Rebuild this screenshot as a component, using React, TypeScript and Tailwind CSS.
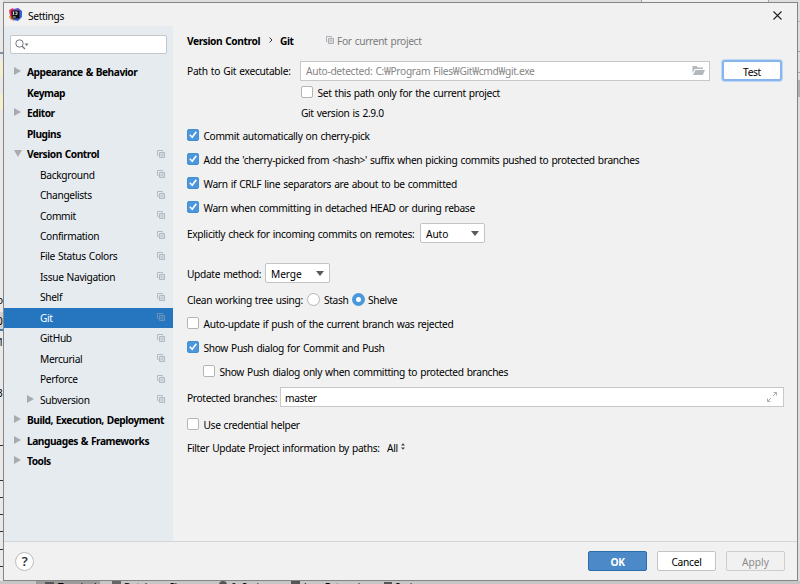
import React from 'react';

function Copy({ className = 'text-[#b3b9bf]' }: { className?: string }) {
  return (
    <svg className={`h-2 w-2 shrink-0 ${className}`} viewBox="0 0 8 8" fill="none" stroke="currentColor">
      <path d="M1.5 5.500H.5v-5h5v1" />
      <path d="M2.500 2.500h5v5h-5z" fill="currentColor" fillOpacity=".35" />
      <path d="M4 5h2" />
    </svg>
  );
}

function Check({ on = false }: { on?: boolean }) {
  return on ? (
    <span className="mb-[2px] flex h-3 w-3 shrink-0 items-center justify-center rounded-[2px] border border-[#438fd2] bg-[#4a97dc]">
      <svg className="h-[10px] w-[10px] shrink-0" viewBox="0 0 10 10" fill="none" stroke="white" strokeWidth="1.6">
        <path d="M1.8 4.8 4.2 7.3 8.3 1.8" />
      </svg>
    </span>
  ) : (
    <span className="mb-[2px] h-3 w-3 shrink-0 rounded-[2px] border border-[#b4b4b4] bg-white" />
  );
}

function CheckRow({ on, label }: { on?: boolean; label: string }) {
  return (
    <label className="flex h-6 items-center gap-[4.5px]">
      <Check on={on} />
      <span>{label}</span>
    </label>
  );
}

function Combo({ value }: { value: string }) {
  return (
    <div className="flex h-5 w-[65px] items-center justify-between rounded-[2px] border border-[#c4c4c4] bg-white pr-[5px] pl-[5px]">
      <span className="pt-[2px] tracking-[-0.1px]">{value}</span>
      <svg className="h-[5px] w-[8px]" viewBox="0 0 8 5">
        <path d="M0 0h8L4 5z" fill="#5a5a5a" />
      </svg>
    </div>
  );
}

type Node = { label: string; level: 0 | 1; arrow?: 'right' | 'down'; copy?: boolean; active?: boolean };

const tree: Node[] = [
  { label: 'Appearance & Behavior', level: 0, arrow: 'right' },
  { label: 'Keymap', level: 0 },
  { label: 'Editor', level: 0, arrow: 'right' },
  { label: 'Plugins', level: 0 },
  { label: 'Version Control', level: 0, arrow: 'down', copy: true },
  { label: 'Background', level: 1, copy: true },
  { label: 'Changelists', level: 1, copy: true },
  { label: 'Commit', level: 1, copy: true },
  { label: 'Confirmation', level: 1, copy: true },
  { label: 'File Status Colors', level: 1, copy: true },
  { label: 'Issue Navigation', level: 1, copy: true },
  { label: 'Shelf', level: 1, copy: true },
  { label: 'Git', level: 1, copy: true, active: true },
  { label: 'GitHub', level: 1, copy: true },
  { label: 'Mercurial', level: 1, copy: true },
  { label: 'Perforce', level: 1, copy: true },
  { label: 'Subversion', level: 1, arrow: 'right', copy: true },
  { label: 'Build, Execution, Deployment', level: 0, arrow: 'right' },
  { label: 'Languages & Frameworks', level: 0, arrow: 'right' },
  { label: 'Tools', level: 0, arrow: 'right' },
];

function TreeRow({ n }: { n: Node }) {
  return (
    <div
      className={`flex h-[20.47px] shrink-0 items-center pr-2 ${n.level ? 'pl-[23px]' : 'pl-[10px]'} ${
        n.active ? 'bg-[#2675bf] text-white' : ''
      }`}
    >
      <span className="flex w-[13px] shrink-0 items-center">
        {n.arrow === 'right' && (
          <svg className="mb-[2px] h-2 w-[7px]" viewBox="0 0 7 8">
            <path d="M0 0 7 4 0 8z" fill="#a9abad" />
          </svg>
        )}
        {n.arrow === 'down' && (
          <svg className="mb-[2px] h-[7px] w-2" viewBox="0 0 8 7">
            <path d="M0 0h8L4 7z" fill="#a9abad" />
          </svg>
        )}
      </span>
      <span className={`whitespace-nowrap ${n.level ? 'tracking-[-0.34px]' : 'font-bold tracking-[-0.48px]'}`}>
        {n.label}
      </span>
      {n.copy && (
        <span className="ml-auto pb-px">
          <Copy className={n.active ? 'text-[#6b93bb]' : 'text-[#b3b9bf]'} />
        </span>
      )}
    </div>
  );
}

function Logo() {
  return (
    <svg className="h-[13px] w-[13px]" viewBox="0 0 13 13">
      <path d="M0 2 4 0 6 3 3 10 1 8z" fill="#f0306a" />
      <path d="M0 8l3 0 2 5-4-2z" fill="#f8852e" />
      <path d="M5 1 9 0l4 3v6l-4 4-5-1z" fill="#3a62d8" />
      <path d="M9 0l3 3-2 1-4-2z" fill="#7650c8" />
      <path d="M2.5 2.5h8v8h-8z" fill="#111" />
      <path d="M3.7 4h1.6M4.5 4v2.4M3.7 6.4h1.6M6.3 4H8v2.4H6.3M3.7 9h3" stroke="#fff" strokeWidth=".8" fill="none" />
    </svg>
  );
}

/* Editor gutter visible along the left edge of the dialog. */
function LeftStrip() {
  return (
    <div className="absolute top-0 left-0 h-full w-[3px] overflow-hidden bg-[#e9e9e9] text-[10px] leading-3">
      <div className="absolute top-[61px] h-4 w-[3px] bg-[#f3efcf]" />
      <div className="absolute top-[94px] h-4 w-[3px] bg-[#f3efcf]" />
      <div className="absolute top-[52px] h-[2px] w-[3px] bg-[#8390a0]" />
      <div className="absolute top-[312px] h-[17px] w-[3px] bg-[#cfd2d5]" />
      <div className="absolute top-[329px] h-[2px] w-[3px] bg-[#3f7db5]" />
      <span className="absolute top-[294px] -left-[3px]">o</span>
      <span className="absolute top-[315px] -left-[3px]">0</span>
      <span className="absolute top-[336px] -left-[2px]">1</span>
      <span className="absolute top-[387px] -left-[3px]">3</span>
      <div className="absolute top-[445px] h-px w-[3px] bg-[#333]" />
      <div className="absolute top-[480px] h-px w-[3px] bg-[#333]" />
      <div className="absolute top-[497px] h-px w-[3px] bg-[#333]" />
      <div className="absolute top-[514px] h-px w-[3px] bg-[#333]" />
      <div className="absolute top-[531px] h-px w-[3px] bg-[#333]" />
      <div className="absolute top-[549px] h-px w-[3px] bg-[#333]" />
      <div className="absolute top-[566px] h-px w-[3px] bg-[#333]" />
    </div>
  );
}

/* Edges of the main window above and to the right of the dialog. */
function OuterEdges() {
  return (
    <>
      <div className="absolute top-0 left-[641px] h-[2px] w-[128px] border-x border-[#a5a5a5] bg-[#efefef]" />
      <div className="absolute top-[21px] right-0 h-px w-[2px] bg-[#b8b8b8]" />
      <div className="absolute top-[51px] right-0 h-px w-[2px] bg-[#a8a8a8]" />
      <div className="absolute top-[72px] right-0 h-px w-[2px] bg-[#a8a8a8]" />
      <div className="absolute top-[80px] right-0 h-[17px] w-[2px] bg-[#b0b0b0]" />
    </>
  );
}

/* Tool window bar, of which only the top edge shows below the dialog. */
function BottomStrip() {
  return (
    <div className="absolute bottom-0 left-0 h-[3px] w-full overflow-hidden bg-[#c6c6c6] text-[10px] leading-3 text-black">
      <div className="absolute top-0 left-[36px] h-[3px] w-16 bg-[#9b9b9b]" />
      <div className="absolute top-px left-[45px] h-[2px] w-[9px] bg-[#555]" />
      <span className="absolute top-0 left-[58px]">Terminal</span>
      <div className="absolute top-0 left-[112px] h-[3px] w-[9px] bg-[#666]" />
      <span className="absolute top-0 left-[124px] whitespace-nowrap">Database Changes</span>
      <div className="absolute top-0 left-[219px] h-2 w-2 rounded-full bg-[#555]" />
      <span className="absolute top-0 left-[231px]">0: Spring</span>
      <div className="absolute top-0 left-[291px] h-[3px] w-[9px] bg-[#555]" />
      <span className="absolute top-0 left-[304px] whitespace-nowrap">Java Enterprise</span>
      <div className="absolute top-px left-[384px] h-[2px] w-[8px] bg-[#555]" />
      <span className="absolute top-0 left-[395px]">Spring</span>
    </div>
  );
}

export default function App() {
  return (
    <div className="relative flex h-[584px] w-[800px] overflow-hidden bg-[#dedede] pt-[2px] pr-[2px] pb-[3px] pl-[3px] font-['Noto_Sans','Open_Sans',sans-serif] text-[10.2px] leading-[14px] tracking-[-0.34px] [word-spacing:0.75px] text-black">
      <LeftStrip />
      <OuterEdges />
      <BottomStrip />
      <div className="relative flex min-w-0 flex-1 flex-col border border-[#858585] bg-[#f1f1f1]">
        <header className="flex h-[23px] shrink-0 items-center pr-[15px] pl-[5px]">
          <Logo />
          <span className="ml-[6px] pt-[3px]">Settings</span>
          <svg className="mt-[2px] ml-auto h-[9px] w-[9px]" viewBox="0 0 9 9" stroke="#222" strokeWidth="1.1">
            <path d="M.5.5l8 8M8.5.5l-8 8" />
          </svg>
        </header>

        <div className="flex h-[515px] shrink-0">
          <aside className="flex w-[169px] shrink-0 flex-col bg-[#e6ebf0]">
            <div className="mx-[6px] mt-[9px] mb-[8px] flex h-[19px] shrink-0 items-center rounded-[2px] border border-[#c3c7ca] bg-white pl-[4px]">
              <svg className="h-[11px] w-[14px]" viewBox="0 0 14 11" fill="none" stroke="#6f7880">
                <circle cx="4.5" cy="4.5" r="3.7" />
                <path d="M7.2 7.2 10 10" strokeWidth="1.3" />
                <path d="M9.6 4.5h4L11.6 7z" fill="#6f7880" stroke="none" />
              </svg>
            </div>
            {tree.map((n) => (
              <TreeRow key={n.label} n={n} />
            ))}
          </aside>

          <main className="flex min-w-0 flex-1 flex-col pl-[14px] whitespace-nowrap">
            <div className="flex h-[31px] items-center pb-px font-bold tracking-[-0.42px]">
              <span className="w-[82px]">Version Control</span>
              <svg className="mb-[2px] h-[6px] w-[4px]" viewBox="0 0 4 6" fill="none" stroke="#333">
                <path d="M.5.5 3 3 .5 5.5" />
              </svg>
              <span className="ml-[7px] w-[46px]">Git</span>
              <div className="flex items-center gap-[3px] font-normal tracking-[-0.34px] text-[#7b7b7b]">
                <Copy className="mb-[2px] text-[#a9afb4]" />
                <span>For current project</span>
              </div>
            </div>

            <div className="flex h-[27px] items-center">
              <span className="w-[113px] tracking-[-0.28px]">Path to Git executable:</span>
              <div className="flex h-5 w-[410px] items-center justify-between border border-[#c8c8c8] bg-white pr-[4px] pl-[5px] tracking-[-0.31px] text-[#858585]">
                <span className="pt-px">Auto-detected: C:₩Program Files₩Git₩cmd₩git.exe</span>
                <svg className="h-[10px] w-[13px]" viewBox="0 0 13 10" fill="#b2b8bc">
                  <path d="M.5 0h4L6 1.500h5V3H2.800L.5 7z" />
                  <path d="M3.400 4H13l-2.200 5H1z" />
                </svg>
              </div>
              <button className="ml-3 flex h-[21px] w-[60px] items-center justify-center rounded-[3px] border-2 border-[#86b6ec] bg-white pt-[2px] ring-1 ring-[#bdd7f4]">
                Test
              </button>
            </div>

            <div className="flex h-[19px] items-center gap-[4.500px] pb-px pl-[114px]">
              <Check />
              <span>Set this path only for the current project</span>
            </div>
            <div className="flex h-[21px] items-center pb-[2px] pl-[114px]">
              <span>Git version is 2.9.0</span>
            </div>

            <CheckRow on label="Commit automatically on cherry-pick" />
            <CheckRow
              on
              label="Add the 'cherry-picked from <hash>' suffix when picking commits pushed to protected branches"
            />
            <CheckRow on label="Warn if CRLF line separators are about to be committed" />
            <CheckRow on label="Warn when committing in detached HEAD or during rebase" />

            <div className="flex h-[26px] items-center">
              <span className="w-[233px] pt-[2px]">Explicitly check for incoming commits on remotes:</span>
              <Combo value="Auto" />
            </div>
            <div className="mt-[14px] flex h-[26px] items-center">
              <span className="w-[78px] pt-[2px]">Update method:</span>
              <Combo value="Merge" />
            </div>
            <div className="flex h-[26px] items-center">
              <span className="w-[120px] pt-[2px]">Clean working tree using:</span>
              <span className="h-[13px] w-[13px] rounded-full border border-[#b4b4b4] bg-white" />
              <span className="ml-[4px] w-[28px] pt-[2px]">Stash</span>
              <span className="flex h-[13px] w-[13px] items-center justify-center rounded-full bg-[#4a97dc]">
                <span className="h-[5px] w-[5px] rounded-full bg-white" />
              </span>
              <span className="ml-[3px] pt-[2px]">Shelve</span>
            </div>

            <CheckRow label="Auto-update if push of the current branch was rejected" />
            <CheckRow on label="Show Push dialog for Commit and Push" />
            <div className="pl-4">
              <CheckRow label="Show Push dialog only when committing to protected branches" />
            </div>

            <div className="flex h-[26px] items-center">
              <span className="w-[93px] pt-px">Protected branches:</span>
              <div className="flex h-5 w-[504px] items-center justify-between border border-[#c8c8c8] bg-white pr-[6px] pl-[4px]">
                <span className="pt-px">master</span>
                <svg className="h-[10px] w-[10px]" viewBox="0 0 10 10" fill="none" stroke="#a9afb3">
                  <path d="M6 4 9.500.5M6.500.5h3v3M4 6 .5 9.500M.5 6.500v3h3" />
                </svg>
              </div>
            </div>
            <div className="mt-[3px]">
              <CheckRow label="Use credential helper" />
            </div>
            <div className="flex h-[23px] items-center pb-px">
              <span className="w-[200px]">Filter Update Project information by paths:</span>
              <span>All</span>
              <svg className="mb-[3px] ml-[3px] h-[7px] w-[4px]" viewBox="0 0 4 7" fill="#444">
                <path d="M0 2.600 2 .2 4 2.600zM0 4.400h4L2 6.800z" />
              </svg>
            </div>
          </main>
        </div>

        <footer className="flex flex-1 items-center border-t border-[#d3d5d7] pr-[12px] pl-[11px]">
          <span className="flex h-[19px] w-[19px] items-center justify-center rounded-full border border-[#bcbcbc] bg-white text-[13px] font-semibold text-[#333]">
            ?
          </span>
          <div className="ml-auto flex gap-[10px]">
            <button className="flex h-5 w-[59px] items-center justify-center rounded-[2px] border border-[#2b6cab] bg-[#4b89c8] pt-[2px] font-bold text-white">
              OK
            </button>
            <button className="flex h-5 w-[59px] items-center justify-center rounded-[2px] border border-[#c4c4c4] bg-white pt-[2px] tracking-[-0.25px]">
              Cancel
            </button>
            <button className="flex h-5 w-[59px] items-center justify-center rounded-[2px] border border-[#cdcdcd] bg-[#f1f1f1] pt-[2px] tracking-normal text-[#8c8c8c]">
              Apply
            </button>
          </div>
        </footer>
      </div>
    </div>
  );
}
